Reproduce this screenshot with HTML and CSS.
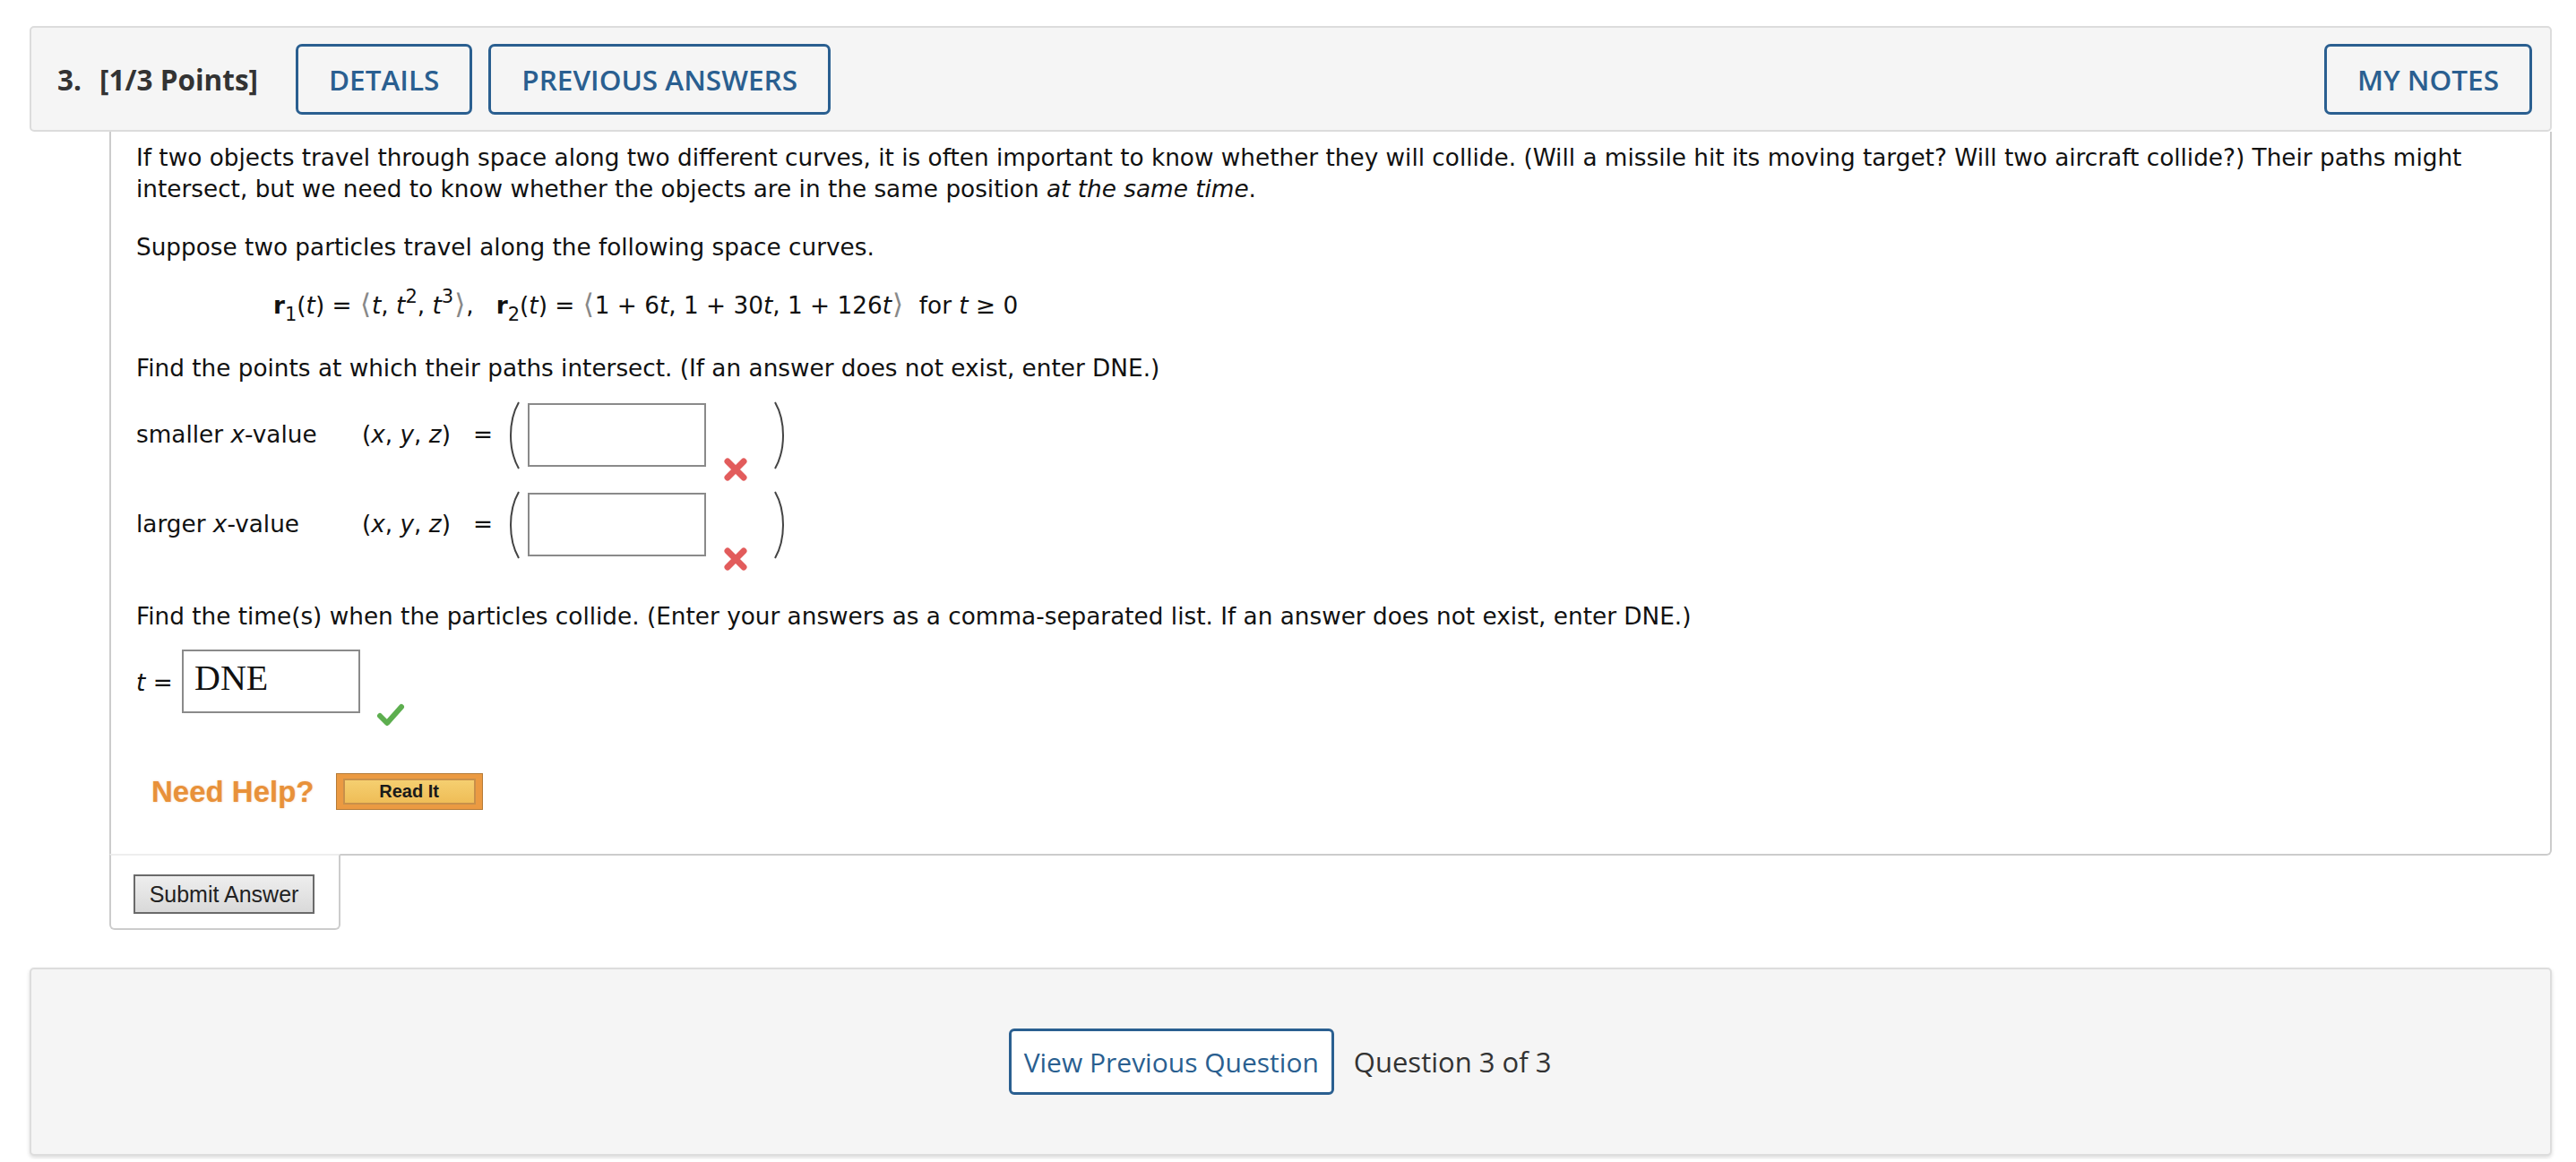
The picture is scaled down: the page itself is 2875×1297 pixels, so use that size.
FILE: index.html
```html
<!DOCTYPE html>
<html>
<head>
<meta charset="utf-8">
<title>Question 3</title>
<link rel="stylesheet" href="styles.css">
</head>
<body>
<div class="page">
  <div class="qhead">
    <span class="qnum">3.</span>
    <span class="qnum qpts">[1/3 Points]</span>
    <span class="hbtn details">DETAILS</span>
    <span class="hbtn prev">PREVIOUS ANSWERS</span>
    <span class="hbtn notes">MY NOTES</span>
  </div>

  <div class="qbody">
    <p class="p1">If two objects travel through space along two different curves, it is often important to know whether they will collide. (Will a missile hit its moving target? Will two aircraft collide?) Their paths might intersect, but we need to know whether the objects are in the same position <i>at the same time</i>.</p>
    <p class="p2">Suppose two particles travel along the following space curves.</p>
    <p class="math"><b>r</b><sub>1</sub>(<i>t</i>) = <span class="ang">⟨</span><i>t</i>, <i>t</i><sup>2</sup>, <i>t</i><sup>3</sup><span class="ang">⟩</span>,&nbsp;&nbsp; <b>r</b><sub>2</sub>(<i>t</i>) = <span class="ang">⟨</span>1 + 6<i>t</i>, 1 + 30<i>t</i>, 1 + 126<i>t</i><span class="ang">⟩</span>&nbsp;&nbsp;for <i>t</i> ≥ 0</p>
    <p class="p3">Find the points at which their paths intersect. (If an answer does not exist, enter DNE.)</p>

    <div class="arow first">
      <span class="alabel">smaller <i>x</i>-value</span>
      <span class="xyz">(<i>x</i>, <i>y</i>, <i>z</i>)</span>
      <span class="eq">=</span>
      <svg class="paren" width="18" height="76" viewBox="0 0 18 76"><path d="M15 1 C3 22 3 54 15 75" fill="none" stroke="#444" stroke-width="2"/></svg>
      <span class="ibox"></span>
      <svg class="xmark" width="28" height="26" viewBox="0 0 28 26"><path d="M5 4 L23 22 M23 4 L5 22" stroke="#e25c5c" stroke-width="7" stroke-linecap="round"/></svg>
      <svg class="paren rp" width="18" height="76" viewBox="0 0 18 76"><path d="M3 1 C15 22 15 54 3 75" fill="none" stroke="#444" stroke-width="2"/></svg>
    </div>
    <div class="arow second">
      <span class="alabel">larger <i>x</i>-value</span>
      <span class="xyz">(<i>x</i>, <i>y</i>, <i>z</i>)</span>
      <span class="eq">=</span>
      <svg class="paren" width="18" height="76" viewBox="0 0 18 76"><path d="M15 1 C3 22 3 54 15 75" fill="none" stroke="#444" stroke-width="2"/></svg>
      <span class="ibox"></span>
      <svg class="xmark" width="28" height="26" viewBox="0 0 28 26"><path d="M5 4 L23 22 M23 4 L5 22" stroke="#e25c5c" stroke-width="7" stroke-linecap="round"/></svg>
      <svg class="paren rp" width="18" height="76" viewBox="0 0 18 76"><path d="M3 1 C15 22 15 54 3 75" fill="none" stroke="#444" stroke-width="2"/></svg>
    </div>

    <p class="p4">Find the time(s) when the particles collide. (Enter your answers as a comma-separated list. If an answer does not exist, enter DNE.)</p>
    <div class="trow">
      <span class="tlabel"><i>t</i> =</span>
      <span class="ibox tbox">DNE</span>
      <svg class="check" width="32" height="26" viewBox="0 0 32 26"><path d="M4 14 L12 22 L28 4" fill="none" stroke="#5dae4f" stroke-width="6" stroke-linejoin="round" stroke-linecap="round"/></svg>
    </div>

    <div class="help">
      <span class="needhelp">Need Help?</span>
      <span class="readit"><span class="readit-in">Read It</span></span>
    </div>
  </div>

  <div class="submit-tab">
    <span class="submit">Submit Answer</span>
  </div>

  <div class="footer">
    <span class="viewprev">View Previous Question</span>
    <span class="qcount">Question 3 of 3</span>
  </div>
</div>
</body>
</html>
```

FILE: styles.css
```css
html, body {
  margin: 0;
  padding: 0;
  background: #ffffff;
}

.page {
  padding: 29px 27px 4px 33px;
}

/* Header bar */
.qhead {
  display: flex;
  align-items: center;
  height: 118px;
  box-sizing: border-box;
  background: #f5f5f5;
  border: 2px solid #dcdcdc;
  border-radius: 5px;
  padding: 0 20px 0 29px;
  font-family: "Open Sans", sans-serif;
}

.qnum {
  font-weight: 700;
  font-size: 31.5px;
  color: #333333;
}

.qpts {
  margin-left: 20px;
}

.hbtn {
  display: flex;
  align-items: center;
  height: 79px;
  box-sizing: border-box;
  border: 3px solid #2a5f90;
  border-radius: 7px;
  padding: 0 34px;
  color: #2a5f90;
  font-weight: 600;
  font-size: 31.5px;
}

.details {
  margin-left: 42px;
}

.prev {
  margin-left: 18px;
}

.notes {
  margin-left: auto;
  padding: 0 34px;
}

/* Question body */
.qbody {
  margin-left: 89px;
  border: 2px solid #cccccc;
  border-top: none;
  border-bottom-right-radius: 6px;
  padding: 12px 30px 49px 28px;
  font-family: "DejaVu Sans", Verdana, sans-serif;
  font-size: 26.3px;
  line-height: 35px;
  color: #111111;
}

.qbody p {
  margin: 0;
}

.p2 {
  margin-top: 30px !important;
}

.math {
  margin-top: 28px !important;
  padding-left: 153px;
}

.math sub, .math sup {
  font-size: 21px;
  line-height: 0;
}

.math sub {
  vertical-align: -8px;
}

.math sup {
  vertical-align: 12px;
}

.ang {
  color: #888888;
  font-size: 31px;
  padding: 0 1px;
}

.p3 {
  margin-top: 35px !important;
}

.arow {
  display: flex;
  align-items: center;
  height: 71px;
}

.arow.first {
  margin-top: 21px;
}

.arow.second {
  margin-top: 29px;
}

.alabel {
  width: 252px;
}

.xyz {
  width: 124px;
}

.eq {
  width: 36px;
}

.paren {
  flex: none;
}

.ibox {
  display: block;
  width: 199px;
  height: 71px;
  box-sizing: border-box;
  border: 2px solid #8a8a8a;
  background: #ffffff;
  margin-left: 7px;
}

.xmark {
  flex: none;
  align-self: flex-end;
  margin: 0 0 -16px 19px;
}

.rp {
  margin-left: 27px;
}

.p4 {
  margin-top: 50px !important;
}

.trow {
  display: flex;
  align-items: center;
  margin-top: 19px;
  height: 71px;
}

.tlabel {
  width: 51px;
  padding-top: 4px;
}

.tbox {
  margin-left: 0;
  font-family: "Liberation Serif", "Times New Roman", serif;
  font-size: 40px;
  line-height: 40px;
  padding: 10px 0 0 12px;
  color: #111111;
}

.check {
  flex: none;
  align-self: flex-end;
  margin: 0 0 -15px 18px;
}

.help {
  display: flex;
  align-items: center;
  margin-top: 67px;
  padding-left: 17px;
}

.needhelp {
  font-family: "Liberation Sans", Arial, sans-serif;
  font-weight: 700;
  font-size: 33px;
  color: #e8913a;
  text-shadow: 0 0 2px rgba(232, 145, 58, 0.5);
}

.readit {
  display: block;
  margin-left: 24px;
  width: 164px;
  height: 41px;
  box-sizing: border-box;
  background: #eb9a42;
  border: 1px solid #b57b37;
  padding: 5px 7px;
}

.readit-in {
  display: flex;
  align-items: center;
  justify-content: center;
  height: 100%;
  box-sizing: border-box;
  background: linear-gradient(#f5cf70, #efbd57);
  border: 2px solid #c8904a;
  font-family: "Liberation Sans", Arial, sans-serif;
  font-weight: 700;
  font-size: 20px;
  color: #1a1a1a;
}

/* Submit tab */
.submit-tab {
  margin-left: 89px;
  margin-top: -2px;
  width: 258px;
  height: 85px;
  box-sizing: border-box;
  border: 2px solid #cccccc;
  border-top-color: #eeeeee;
  border-radius: 0 0 6px 6px;
  background: #ffffff;
  padding: 21px 0 0 25px;
}

.submit {
  display: inline-flex;
  align-items: center;
  justify-content: center;
  width: 202px;
  height: 44px;
  box-sizing: border-box;
  border: 2px solid #6a6a6a;
  background: linear-gradient(#eeeeee, #d9d9d9);
  font-family: "Liberation Sans", Arial, sans-serif;
  font-size: 25px;
  color: #222222;
}

/* Footer */
.footer {
  margin-top: 42px;
  height: 210px;
  box-sizing: border-box;
  background: #f5f5f5;
  border: 2px solid #dddddd;
  border-radius: 5px;
  box-shadow: 0 2px 4px rgba(0, 0, 0, 0.15);
  display: flex;
  align-items: center;
  justify-content: center;
  gap: 22px;
  font-family: "Open Sans", sans-serif;
  padding-right: 24px;
}

.viewprev {
  display: flex;
  align-items: center;
  height: 74px;
  box-sizing: border-box;
  border: 3px solid #2a5f90;
  border-radius: 6px;
  background: #ffffff;
  padding: 0 14px;
  color: #2a5f90;
  font-size: 30px;
}

.qcount {
  color: #333333;
  font-size: 31px;
}
```
